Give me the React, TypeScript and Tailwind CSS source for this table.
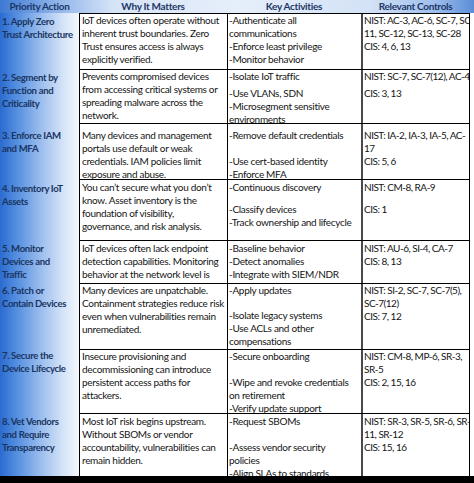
type Item = { mt?: number; l: string[] }

type Row = {
  h: number
  p1: number
  pt: number
  c1: string[]
  c2: string[]
  c3: Item[]
  c4: Item[]
}

const rows: Row[] = [
  {
    h: 56, p1: 1.5, pt: 0,
    c1: ["1. Apply Zero", "Trust Architecture"],
    c2: ["IoT devices often operate without", "inherent trust boundaries. Zero", "Trust ensures access is always", "explicitly verified."],
    c3: [{ l: ["-Authenticate all", "communications"] }, { l: ["-Enforce least privilege"] }, { l: ["-Monitor behavior"] }],
    c4: [{ l: ["NIST: AC-3, AC-6, SC-7, SC-", "11, SC-12, SC-13, SC-28"] }, { l: ["CIS: 4, 6, 13"] }],
  },
  {
    h: 54, p1: 1.5, pt: 0,
    c1: ["2. Segment by", "Function and", "Criticality"],
    c2: ["Prevents compromised devices", "from accessing critical systems or", "spreading malware across the", "network."],
    c3: [{ l: ["-Isolate IoT traffic"] }, { mt: 4, l: ["-Use VLANs, SDN"] }, { l: ["-Microsegment sensitive", "environments"] }],
    c4: [{ l: ["NIST: SC-7, SC-7(12), AC-4"] }, { mt: 4, l: ["CIS: 3, 13"] }],
  },
  {
    h: 56, p1: 5.5, pt: 4.5,
    c1: ["3. Enforce IAM", "and MFA"],
    c2: ["Many devices and management", "portals use default or weak", "credentials. IAM policies limit", "exposure and abuse."],
    c3: [{ l: ["-Remove default credentials"] }, { mt: 13, l: ["-Use cert-based identity"] }, { l: ["-Enforce MFA"] }],
    c4: [{ l: ["NIST: IA-2, IA-3, IA-5, AC-", "17"] }, { l: ["CIS: 5, 6"] }],
  },
  {
    h: 61, p1: 2.5, pt: 1,
    c1: ["4. Inventory IoT", "Assets"],
    c2: ["You can\u2019t secure what you don\u2019t", "know. Asset inventory is the", "foundation of visibility,", "governance, and risk analysis."],
    c3: [{ l: ["-Continuous discovery"] }, { mt: 8.5, l: ["-Classify devices"] }, { l: ["-Track ownership and lifecycle"] }],
    c4: [{ l: ["NIST: CM-8, RA-9"] }, { mt: 8.5, l: ["CIS: 1"] }],
  },
  {
    h: 43, p1: 1.5, pt: 0.5,
    c1: ["5. Monitor", "Devices and", "Traffic"],
    c2: ["IoT devices often lack endpoint", "detection capabilities. Monitoring", "behavior at the network level is"],
    c3: [{ l: ["-Baseline behavior"] }, { l: ["-Detect anomalies"] }, { l: ["-Integrate with SIEM/NDR"] }],
    c4: [{ l: ["NIST: AU-6, SI-4, CA-7"] }, { l: ["CIS: 8, 13"] }],
  },
  {
    h: 66, p1: 0.5, pt: 0,
    c1: ["6. Patch or", "Contain Devices"],
    c2: ["Many devices are unpatchable.", "Containment strategies reduce risk", "even when vulnerabilities remain", "unremediated."],
    c3: [{ l: ["-Apply updates"] }, { mt: 12, l: ["-Isolate legacy systems"] }, { l: ["-Use ACLs and other", "compensations"] }],
    c4: [{ l: ["NIST: SI-2, SC-7, SC-7(5),", "SC-7(12)"] }, { l: ["CIS: 7, 12"] }],
  },
  {
    h: 64, p1: 0, pt: 0,
    c1: ["7. Secure the", "Device Lifecycle"],
    c2: ["Insecure provisioning and", "decommissioning can introduce", "persistent access paths for", "attackers."],
    c3: [{ l: ["-Secure onboarding"] }, { mt: 13, l: ["-Wipe and revoke credentials", "on retirement"] }, { l: ["-Verify update support"] }],
    c4: [{ l: ["NIST: CM-8, MP-6, SR-3,", "SR-5"] }, { l: ["CIS: 2, 15, 16"] }],
  },
  {
    h: 63, p1: 1.5, pt: 0.5,
    c1: ["8. Vet Vendors", "and Require", "Transparency"],
    c2: ["Most IoT risk begins upstream.", "Without SBOMs or vendor", "accountability, vulnerabilities can", "remain hidden."],
    c3: [{ l: ["-Request SBOMs"] }, { mt: 13, l: ["-Assess vendor security", "policies"] }, { l: ["-Align SLAs to standards"] }],
    c4: [{ l: ["NIST: SR-3, SR-5, SR-6, SR-", "11, SR-12"] }, { l: ["CIS: 15, 16"] }],
  },
]

function Lines({ lines }: { lines: string[] }) {
  return (
    <>
      {lines.map((t, i) => (
        <div key={i} className="h-[13px] leading-[13px] whitespace-nowrap">
          {t}
        </div>
      ))}
    </>
  )
}

function Items({ items, pt }: { items: Item[]; pt: number }) {
  return (
    <div style={{ paddingTop: pt }}>
      {items.map((it, i) => (
        <div key={i} style={{ marginTop: it.mt ?? 0 }}>
          <Lines lines={it.l} />
        </div>
      ))}
    </div>
  )
}

const leftFade = "bg-[linear-gradient(to_right,#2b6bd0_0%,#5690e0_22%,#9cbeee_52%,#d9e6f8_82%,#f3f7fd_100%)]"

export default function App() {
  return (
    <div className="w-[474px] h-[483px] overflow-hidden bg-white font-['Lato','Open_Sans',sans-serif] text-[10px] tracking-[-0.3px] text-[#151515]">
      <div className="flex h-[13px] bg-[linear-gradient(to_right,#3e7ad3_0%,#8fb4ea_12%,#d6e4f7_24%,#e6eefa_50%,#d3e2f6_78%,#9dbdec_92%,#5a8dd8_100%)] font-bold text-[10px] leading-[13px] text-[#1c3766]">
        <div className="w-[79px] text-center">Priority Action</div>
        <div className="w-[148px] text-center">Why It Matters</div>
        <div className="w-[134px] text-center">Key Activities</div>
        <div className="w-[109px] text-center">Relevant Controls</div>
      </div>
      {rows.map((r, i) => (
        <div key={i} className="flex" style={{ height: r.h }}>
          <div className={`w-[79px] shrink-0 pl-[2px] font-bold text-[9.6px] tracking-[-0.35px] text-[#1a3562] overflow-hidden ${leftFade}`} style={{ paddingTop: r.p1 }}>
            <Lines lines={r.c1} />
          </div>
          <div className="flex border-t border-black w-[391px] shrink-0">
            <div className="w-[148px] shrink-0 border-l border-black pl-[2px] overflow-hidden" style={{ paddingTop: r.pt }}>
              <Lines lines={r.c2} />
            </div>
            <div className="w-[134px] shrink-0 border-l border-black pl-[1px] overflow-hidden">
              <Items items={r.c3} pt={r.pt} />
            </div>
            <div className="w-[109px] shrink-0 border-l-2 border-r border-l-[#4a4a4a] border-r-black pl-[1px] tracking-[-0.5px] overflow-hidden">
              <Items items={r.c4} pt={r.pt} />
            </div>
          </div>
        </div>
      ))}
      <div className="h-[7px] bg-black" />
    </div>
  )
}
